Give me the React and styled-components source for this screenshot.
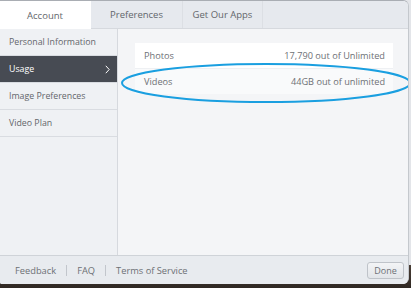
import React from 'react';
import styled, { createGlobalStyle } from 'styled-components';

const GlobalStyle = createGlobalStyle`
  html, body {
    margin: 0;
    padding: 0;
  }
  body {
    width: 411px;
    height: 288px;
    overflow: hidden;
    background: linear-gradient(to bottom, #e3e5e9 0, #e3e5e9 92%, #4b3f37 92%, #2f2823 100%);
    font-family: "Open Sans", "Liberation Sans", sans-serif;
  }
`;

const Window = styled.div`
  position: relative;
  width: 409px;
  height: 284px;
  display: flex;
  flex-direction: column;
  background: #f4f5f7;
  border-top: 1px solid #a9adb3;
  border-right: 1px solid #c4c8cd;
  border-radius: 0 6px 6px 2px;
  overflow: hidden;
  box-sizing: border-box;
`;

const TabBar = styled.div`
  display: flex;
  height: 28px;
  background: #e6e9ee;
  border-bottom: 1px solid #d6d9de;
  box-sizing: border-box;
`;

const Tab = styled.div`
  width: ${(p) => p.w}px;
  display: flex;
  align-items: center;
  justify-content: center;
  font-size: 9.5px;
  color: #63666b;
  background: ${(p) => (p.active ? '#ffffff' : 'transparent')};
  border-right: 1px solid ${(p) => (p.active ? '#ffffff' : '#dcdfe4')};
  margin-bottom: ${(p) => (p.active ? '-1px' : '0')};
  box-sizing: border-box;
`;

const Body = styled.div`
  flex: 1;
  display: flex;
`;

const Sidebar = styled.div`
  width: 118px;
  background: #eff1f4;
  border-right: 1px solid #d6d9de;
  box-sizing: border-box;
`;

const SideItem = styled.div`
  height: 27px;
  display: flex;
  align-items: center;
  justify-content: space-between;
  padding: 0 7px 0 9px;
  font-size: 8.8px;
  color: ${(p) => (p.active ? '#ffffff' : '#63666b')};
  background: ${(p) => (p.active ? '#474b53' : 'transparent')};
  border-bottom: 1px solid #d9dce1;
  box-sizing: border-box;
`;

const Chevron = styled.svg`
  width: 5px;
  height: 9px;
`;

const Content = styled.div`
  position: relative;
  flex: 1;
  padding: 14px 15px 0 17px;
`;

const Card = styled.div`
  background: #ffffff;
  border-radius: 2px;
`;

const Row = styled.div`
  height: 25px;
  display: flex;
  align-items: center;
  justify-content: space-between;
  padding: 0 8px 0 9px;
  font-size: 9.2px;
  color: #6d7075;
  border-top: ${(p) => (p.first ? 'none' : '1px solid #eef0f3')};
  background: ${(p) => (p.first ? '#ffffff' : '#f9fafb')};
`;

const Ring = styled.svg`
  position: absolute;
  left: 2px;
  top: 33px;
  width: 292px;
  height: 42px;
  overflow: visible;
`;

const Footer = styled.div`
  height: 29px;
  display: flex;
  align-items: center;
  justify-content: space-between;
  padding: 0 4px 0 15px;
  background: #e8ebef;
  border-top: 1px solid #cfd3d8;
  box-sizing: border-box;
`;

const Links = styled.div`
  display: flex;
  align-items: center;
  font-size: 9.3px;
  color: #6d7075;
`;

const Sep = styled.span`
  width: 1px;
  height: 11px;
  background: #c2c6cc;
  margin: 0 ${(p) => p.m}px;
`;

const DoneButton = styled.button`
  width: 37px;
  height: 17px;
  padding: 0;
  font-family: "Open Sans", "Liberation Sans", sans-serif;
  font-size: 9px;
  color: #6d7075;
  background: linear-gradient(to bottom, #f3f4f6, #e2e5e9);
  border: 1px solid #bfc3c9;
  border-radius: 3px;
  margin-top: 1px;
`;

const sideItems = ['Personal Information', 'Usage', 'Image Preferences', 'Video Plan'];

export default function App() {
  return (
    <>
      <GlobalStyle />
      <Window>
        <TabBar>
          <Tab w={91} active>Account</Tab>
          <Tab w={92}>Preferences</Tab>
          <Tab w={80}>Get Our Apps</Tab>
        </TabBar>
        <Body>
          <Sidebar>
            {sideItems.map((item) => (
              <SideItem key={item} active={item === 'Usage'}>
                {item}
                {item === 'Usage' && (
                  <Chevron viewBox="0 0 5 9">
                    <path d="M0.8 0.8 L4.2 4.5 L0.8 8.2" fill="none" stroke="#ffffff" strokeWidth="1" />
                  </Chevron>
                )}
              </SideItem>
            ))}
          </Sidebar>
          <Content>
            <Card>
              <Row first>
                <span>Photos</span>
                <span>17,790 out of Unlimited</span>
              </Row>
              <Row>
                <span>Videos</span>
                <span>44GB out of unlimited</span>
              </Row>
            </Card>
            <Ring viewBox="0 0 292 42">
              <ellipse cx="146" cy="21" rx="144" ry="19" fill="none" stroke="#1a9fe0" strokeWidth="2" />
            </Ring>
          </Content>
        </Body>
        <Footer>
          <Links>
            <span>Feedback</span>
            <Sep m={10} />
            <span>FAQ</span>
            <Sep m={10} />
            <span>Terms of Service</span>
          </Links>
          <DoneButton>Done</DoneButton>
        </Footer>
      </Window>
    </>
  );
}
